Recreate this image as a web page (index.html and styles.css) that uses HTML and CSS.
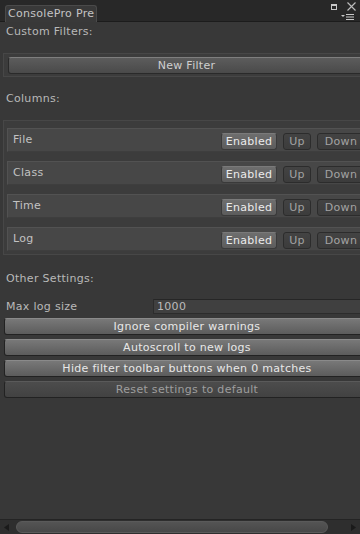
FILE: index.html
```html
<!DOCTYPE html>
<html>
<head>
<meta charset="utf-8">
<link rel="stylesheet" href="styles.css">
</head>
<body>
<div class="window">
  <div class="titlebar">
    <div class="tab"><span class="tab-text">ConsolePro Pre</span></div>
    <div class="win-icons">
      <svg class="ico-max" width="6" height="6" viewBox="0 0 6 6"><rect x="0.5" y="0.5" width="5" height="5" fill="none" stroke="#c8c8c8" stroke-width="1"/><rect x="0" y="0" width="6" height="2" fill="#c8c8c8"/></svg>
      <svg class="ico-close" width="9" height="9" viewBox="0 0 9 9"><path d="M0.5 0.5 L8.5 8.5 M8.5 0.5 L0.5 8.5" stroke="#bdbdbd" stroke-width="1.1"/></svg>
      <svg class="ico-menu" width="13" height="6" viewBox="0 0 13 6"><path d="M0 1 L4 1 L2 3 Z" fill="#c8c8c8"/><rect x="5" y="0" width="8" height="1" fill="#c8c8c8"/><rect x="5" y="2.5" width="8" height="1" fill="#c8c8c8"/><rect x="5" y="5" width="8" height="1" fill="#c8c8c8"/></svg>
    </div>
  </div>
  <div class="content">
    <div class="label first">Custom Filters:</div>
    <div class="box filter-box">
      <div class="btn wide-btn new-filter">New Filter</div>
    </div>
    <div class="label columns-label">Columns:</div>
    <div class="box columns-box">
      <div class="row"><span class="row-name">File</span><div class="row-btns"><span class="btn small on">Enabled</span><span class="btn small off up">Up</span><span class="btn small off down">Down</span></div></div>
      <div class="row"><span class="row-name">Class</span><div class="row-btns"><span class="btn small on">Enabled</span><span class="btn small off up">Up</span><span class="btn small off down">Down</span></div></div>
      <div class="row"><span class="row-name">Time</span><div class="row-btns"><span class="btn small on">Enabled</span><span class="btn small off up">Up</span><span class="btn small off down">Down</span></div></div>
      <div class="row"><span class="row-name">Log</span><div class="row-btns"><span class="btn small on">Enabled</span><span class="btn small off up">Up</span><span class="btn small off down">Down</span></div></div>
    </div>
    <div class="label other-label">Other Settings:</div>
    <div class="field-row">
      <span class="field-label">Max log size</span>
      <span class="field">1000</span>
    </div>
    <div class="settings">
      <div class="btn big">Ignore compiler warnings</div>
      <div class="btn big">Autoscroll to new logs</div>
      <div class="btn big">Hide filter toolbar buttons when 0 matches</div>
      <div class="btn big dim">Reset settings to default</div>
    </div>
  </div>
  <div class="hscroll">
    <svg class="arrow" width="5" height="7" viewBox="0 0 5 7"><path d="M5 0 L0 3.5 L5 7 Z" fill="#1a1a1a"/></svg>
    <div class="track"><div class="thumb"></div></div>
    <svg class="arrow" width="5" height="7" viewBox="0 0 5 7"><path d="M0 0 L5 3.5 L0 7 Z" fill="#1a1a1a"/></svg>
  </div>
</div>
</body>
</html>
```
FILE: styles.css
```css
html, body {
  margin: 0;
  padding: 0;
  background: #383838;
  overflow: hidden;
}
body {
  width: 360px;
  height: 534px;
  font-family: "DejaVu Sans", "Liberation Sans", sans-serif;
  font-size: 11px;
  letter-spacing: 0.3px;
  color: #b9b9b9;
}
.window {
  width: 360px;
  height: 534px;
  display: flex;
  flex-direction: column;
  overflow: hidden;
}
.titlebar {
  position: relative;
  height: 21px;
  flex: none;
  background: #282828;
  border-bottom: 1px solid #1c1c1c;
  display: flex;
  align-items: flex-end;
}
.tab {
  margin-left: 5px;
  height: 16px;
  width: 88px;
  padding-left: 2px;
  box-sizing: content-box;
  white-space: nowrap;
  overflow: hidden;
  background: #393939;
  border: 1px solid #4a4a4a;
  border-bottom: none;
  border-radius: 3px 3px 0 0;
  color: #c4c4c4;
  line-height: 16px;
  margin-bottom: -1px;
}
.win-icons {
  position: absolute;
  right: 0;
  top: 0;
  width: 40px;
  height: 21px;
}
.ico-max { position: absolute; left: 11px; top: 4px; }
.ico-close { position: absolute; left: 27px; top: 2px; }
.ico-menu { position: absolute; left: 21px; top: 14px; }
.content {
  flex: 1;
  width: 370px;
  display: flex;
  flex-direction: column;
}
.label {
  padding-left: 6px;
  height: 14px;
  line-height: 14px;
}
.first { margin-top: 3px; }
.box {
  margin-left: 3px;
  background: #3c3c3c;
  border: 1px solid #474747;
}
.filter-box {
  margin-top: 14px;
  padding: 3px 4px 0 4px;
  box-sizing: border-box;
  height: 24px;
}
.btn {
  box-sizing: border-box;
  text-align: center;
  white-space: nowrap;
}
.wide-btn {
  height: 17px;
  line-height: 15px;
  border: 1px solid #2a2a2a;
  border-top-color: #7e7e7e;
  border-radius: 3px;
  background: linear-gradient(#5c5c5c, #4a4a4a);
  color: #cfcfcf;
}
.columns-label { margin-top: 15px; }
.columns-box {
  margin-top: 14px;
  padding: 7px 0 3px 3px;
  display: flex;
  flex-direction: column;
  gap: 9px;
}
.row {
  height: 24px;
  box-sizing: border-box;
  background: #474747;
  border: 1px solid #525252;
  border-bottom-color: #3e3e3e;
  display: flex;
  align-items: flex-start;
}
.row-name {
  margin-left: 5px;
  margin-top: 4px;
  line-height: 14px;
  color: #c2c2c2;
}
.row-btns {
  margin-left: auto;
  margin-top: 4px;
  display: flex;
  gap: 6px;
}
.small {
  height: 17px;
  line-height: 15px;
  border-radius: 3px;
  border: 1px solid #2e2e2e;
}
.on {
  width: 56px;
  background: linear-gradient(#6e6e6e, #5c5c5c);
  border-color: #3a3a3a;
  border-top-color: #7a7a7a;
  color: #ececec;
}
.off {
  background: linear-gradient(#434343, #3c3c3c);
  border-color: #2c2c2c;
  color: #a3a3a3;
}
.up { width: 28px; }
.down { width: 48px; margin-right: 3px; }
.other-label { margin-top: 17px; }
.field-row {
  margin-top: 13px;
  display: flex;
  align-items: center;
  height: 15px;
}
.field-label {
  padding-left: 6px;
  width: 147px;
}
.field {
  flex: 1;
  height: 15px;
  box-sizing: border-box;
  background: #404040;
  border: 1px solid #2c2c2c;
  border-top-color: #262626;
  padding-left: 3px;
  line-height: 13px;
  color: #bcbcbc;
}
.settings {
  margin-top: 4px;
  margin-left: 4px;
  display: flex;
  flex-direction: column;
  gap: 4px;
}
.big {
  height: 17px;
  line-height: 15px;
  border-radius: 3px;
  border: 1px solid #222;
  border-top-color: #8a8a8a;
  background: linear-gradient(#787878, #5c5c5c);
  color: #e8e8e8;
}
.big.dim {
  background: linear-gradient(#4c4c4c, #424242);
  border-top-color: #5a5a5a;
  color: #9e9e9e;
}
.hscroll {
  flex: none;
  height: 14px;
  background: #2e2e2e;
  border-top: 1px solid #242424;
  display: flex;
  align-items: center;
}
.arrow { flex: none; margin: 0 5px 0 4px; }
.hscroll .arrow:last-child { margin: 0 4px 0 8px; }
.track {
  flex: 1;
  height: 13px;
  display: flex;
  align-items: center;
}
.thumb {
  width: 312px;
  height: 12px;
  margin-left: 2px;
  border-radius: 6px;
  background: linear-gradient(#545454, #484848);
  border: 1px solid #5a5a5a;
  box-sizing: border-box;
}
```
